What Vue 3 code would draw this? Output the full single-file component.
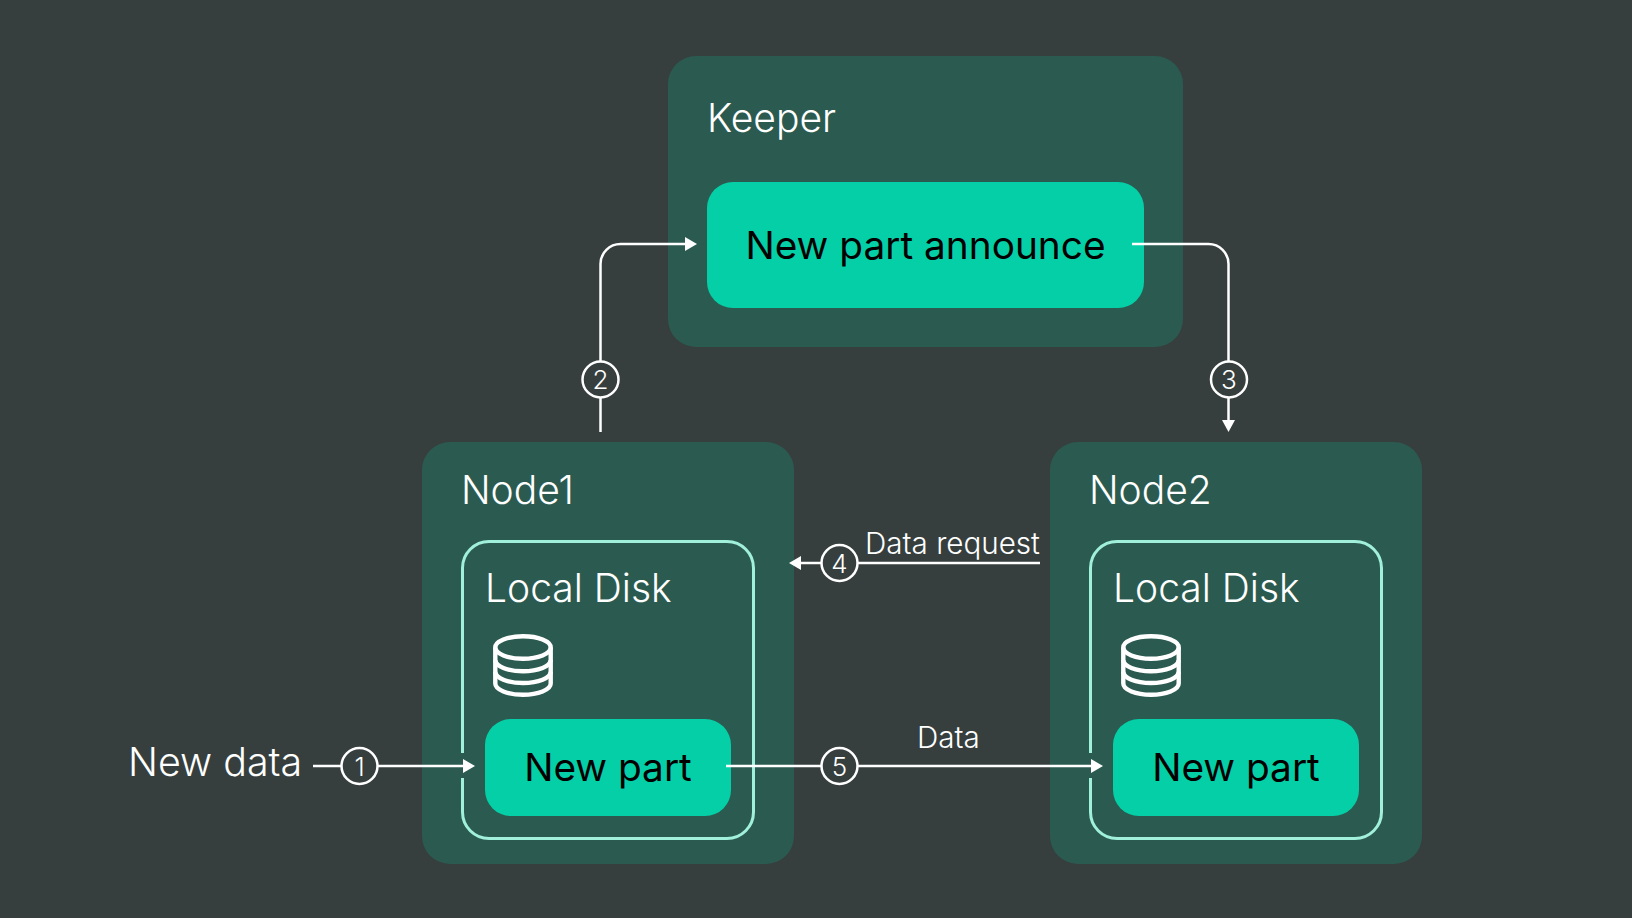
<script setup>
const nodes = [
  { name: 'Node1' },
  { name: 'Node2' },
]

// numbered steps sitting on the arrows
const steps = [
  { n: 1, x: 359.5, y: 766 },
  { n: 2, x: 600.5, y: 379.5 },
  { n: 3, x: 1229, y: 379.5 },
  { n: 4, x: 839.5, y: 563 },
  { n: 5, x: 839.5, y: 766 },
]
</script>

<template>
  <div class="diagram">
    <section class="card keeper">
      <h2 class="title">Keeper</h2>
      <div class="part part--wide">New part announce</div>
    </section>

    <div class="nodes">
      <section v-for="node in nodes" :key="node.name" class="card node">
        <h2 class="title">{{ node.name }}</h2>
        <div class="disk">
          <h3 class="title disk__title">Local Disk</h3>
          <svg class="disk__icon" viewBox="0 0 60 63" fill="none" stroke="#fff" stroke-width="4.4" aria-hidden="true">
            <ellipse cx="30" cy="13.5" rx="27.7" ry="11.2" />
            <path d="M2.3 13.5V49.5C2.3 55.7 14.7 60.7 30 60.7S57.7 55.7 57.7 49.5V13.5" />
            <path d="M2.3 26C2.3 32.2 14.7 37.2 30 37.2S57.7 32.2 57.7 26" />
            <path d="M2.3 37.8C2.3 44 14.7 49 30 49S57.7 44 57.7 37.8" />
          </svg>
          <div class="part">New part</div>
        </div>
      </section>
    </div>

    <svg class="arrows" viewBox="0 0 1632 918" fill="none" aria-hidden="true">
      <!-- breaks in the disk border where the arrows come in -->
      <rect x="458" y="753" width="8" height="25" fill="#2b5b50" />
      <rect x="1087" y="753" width="8" height="25" fill="#2b5b50" />

      <g stroke="#fff" stroke-width="2.5">
        <path d="M313 766H464" />
        <path d="M600.5 432V264A20 20 0 0 1 620.5 244H686" />
        <path d="M1132 244H1208.5A20 20 0 0 1 1228.5 264V421" />
        <path d="M1040 563H800" />
        <path d="M726 766H1092" />
      </g>
      <g fill="#fff">
        <path d="M475 766L463 759V773Z" />
        <path d="M697 244L685 237V251Z" />
        <path d="M1228.5 432L1222 420H1235Z" />
        <path d="M789 563L801 556V570Z" />
        <path d="M1103 766L1091 759V773Z" />
      </g>

      <g v-for="s in steps" :key="s.n">
        <circle :cx="s.x" :cy="s.y" r="18" fill="#363f3e" stroke="#fff" stroke-width="2.5" />
        <text class="step" :x="s.x" :y="s.y + 9.5" text-anchor="middle">{{ s.n }}</text>
      </g>

      <text class="label label--big" x="128" y="775.5">New data</text>
      <text class="label" x="865" y="553.5">Data request</text>
      <text class="label" x="917" y="747.5">Data</text>
    </svg>
  </div>
</template>

<style scoped>
.diagram {
  position: relative;
  box-sizing: border-box;
  width: 1632px;
  height: 918px;
  padding-top: 56px;
  background: #363f3e;
  font-family: Inter, "Liberation Sans", sans-serif;
  overflow: hidden;
}

.card {
  box-sizing: border-box;
  background: #2b5b50;
  border-radius: 28px;
}

.title {
  margin: 0;
  font-size: 39px;
  font-weight: 350;
  line-height: 46px;
  color: #fff;
}

.keeper {
  width: 515px;
  height: 291px;
  margin-left: 668px;
  padding: 39px 39px 0;
}

.keeper .title {
  margin-bottom: 41px;
}

.part {
  display: flex;
  align-items: center;
  justify-content: center;
  box-sizing: border-box;
  height: 97px;
  padding-bottom: 2px;
  background: #05cfa7;
  border-radius: 26px;
  font-size: 38.8px;
  color: #000;
}

.part--wide {
  height: 126px;
}

.nodes {
  display: flex;
  gap: 256px;
  margin-top: 95px;
  padding-left: 422px;
}

.node {
  width: 372px;
  height: 422px;
  padding: 25px 39px 0;
}

.node > .title {
  margin-bottom: 27px;
}

.disk {
  box-sizing: border-box;
  width: 294px;
  height: 300px;
  padding: 22px 21px 0;
  border: 3px solid #a0f0dc;
  border-radius: 28px;
}

.disk__icon {
  display: block;
  width: 60px;
  height: 63px;
  margin: 23.3px 0 22px 7.5px;
}

.arrows {
  position: absolute;
  inset: 0;
  width: 100%;
  height: 100%;
  pointer-events: none;
}

.step {
  font-size: 26px;
  font-weight: 300;
  fill: #fff;
}

.label {
  font-size: 29.6px;
  font-weight: 350;
  fill: #fff;
}

.label--big {
  font-size: 39.4px;
}
</style>

<style>
body {
  margin: 0;
  background: #363f3e;
}
</style>
